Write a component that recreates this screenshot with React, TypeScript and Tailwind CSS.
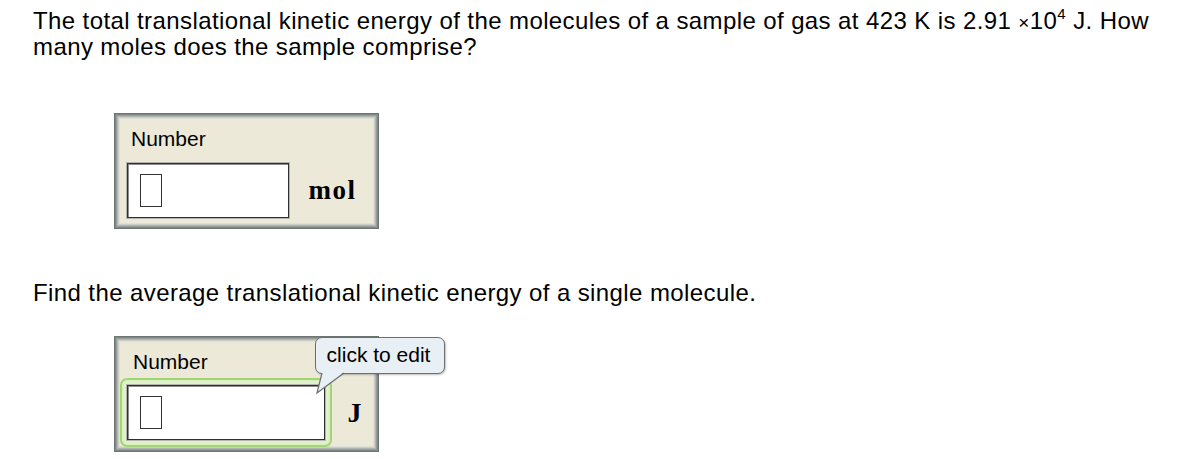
import React from "react";

const sans = "font-['Liberation_Sans',Arial,sans-serif]";
const frame =
  "relative w-[265px] h-[116px] bg-[#ece9d8] border border-[#6f7773] shadow-[inset_0_0_0_1px_#7f8783,inset_0_0_0_2px_#989e9b,inset_0_0_0_3px_#b2b6b3,inset_0_0_0_4px_#cbcdc8,inset_0_0_0_5px_#dedfd6]";

function Cursor() {
  return <div className="ml-[12px] w-[22px] h-[33px] border border-[#333] bg-white" />;
}

function InputBox({ width }: { width: string }) {
  return (
    <div
      className={`${width} h-[55px] bg-white border border-[#2f2f2f] shadow-[inset_1px_1px_0_#8c8c8c,0_0_0_1px_#b5b5b0] flex items-center`}
    >
      <Cursor />
    </div>
  );
}

function Tooltip() {
  return (
    <div className="absolute left-[200px] top-[0px] w-[130px] h-[37px] rounded-[7px] border border-[#6b6f72] bg-[#e8eff5] shadow-[1px_1px_2px_rgba(0,0,0,0.25)] flex items-center justify-center">
      <span className={`${sans} text-[21px] leading-none text-black pb-[3px] pr-[3px]`}>click to edit</span>
      <svg
        className="absolute left-[0px] top-[34px]"
        width="34"
        height="24"
        viewBox="0 0 34 24"
      >
        <path d="M6 0 L1 21 L28 0 Z" fill="#e8eff5" />
        <path d="M6 1 L1 21 L28 1" fill="none" stroke="#6b6f72" strokeWidth="1.2" />
      </svg>
    </div>
  );
}

export default function App() {
  return (
    <div className={`${sans} w-[1190px] h-[476px] bg-white text-black px-[33px] pt-[9px]`}>
      <p className="text-[24px] leading-[24px] tracking-[0.4px]">
        The total translational kinetic energy of the molecules of a sample of gas at 423 K is
        2.91 <span className="text-[19px]">×</span>10
        <sup className="text-[15px] relative top-[-10px]">4</sup> J. How
        <br />
        many moles does the sample comprise?
      </p>

      <div className={`${frame} ml-[81px] mt-[54px] pt-[13px] pl-[12px]`}>
        <div className="text-[21px] leading-[24px] ml-[4px]">Number</div>
        <div className="flex items-center mt-[12px]">
          <InputBox width="w-[162px]" />
          <div className="flex-1 text-center font-['Liberation_Serif','Times_New_Roman',serif] font-bold text-[27px] tracking-[1.5px] pr-[2px]">
            mol
          </div>
        </div>
      </div>

      <p className="text-[24px] leading-[28px] tracking-[0.4px] mt-[50px]">
        Find the average translational kinetic energy of a single molecule.
      </p>

      <div className={`${frame} ml-[81px] mt-[29px] pt-[13px] pl-[12px]`}>
        <div className="text-[21px] leading-[24px] ml-[6px]">Number</div>
        <div className="flex items-center mt-[11px]">
          <div className="-m-[7px] p-[5px] rounded-[7px] border-2 border-[#a3d673] bg-[#dff2cb] shadow-[inset_0_0_2px_#c8eaa5]">
            <InputBox width="w-[198px]" />
          </div>
          <div className="flex-1 text-center font-['Liberation_Serif','Times_New_Roman',serif] font-bold text-[28px] pl-[6px]">
            J
          </div>
        </div>
        <Tooltip />
      </div>
    </div>
  );
}
